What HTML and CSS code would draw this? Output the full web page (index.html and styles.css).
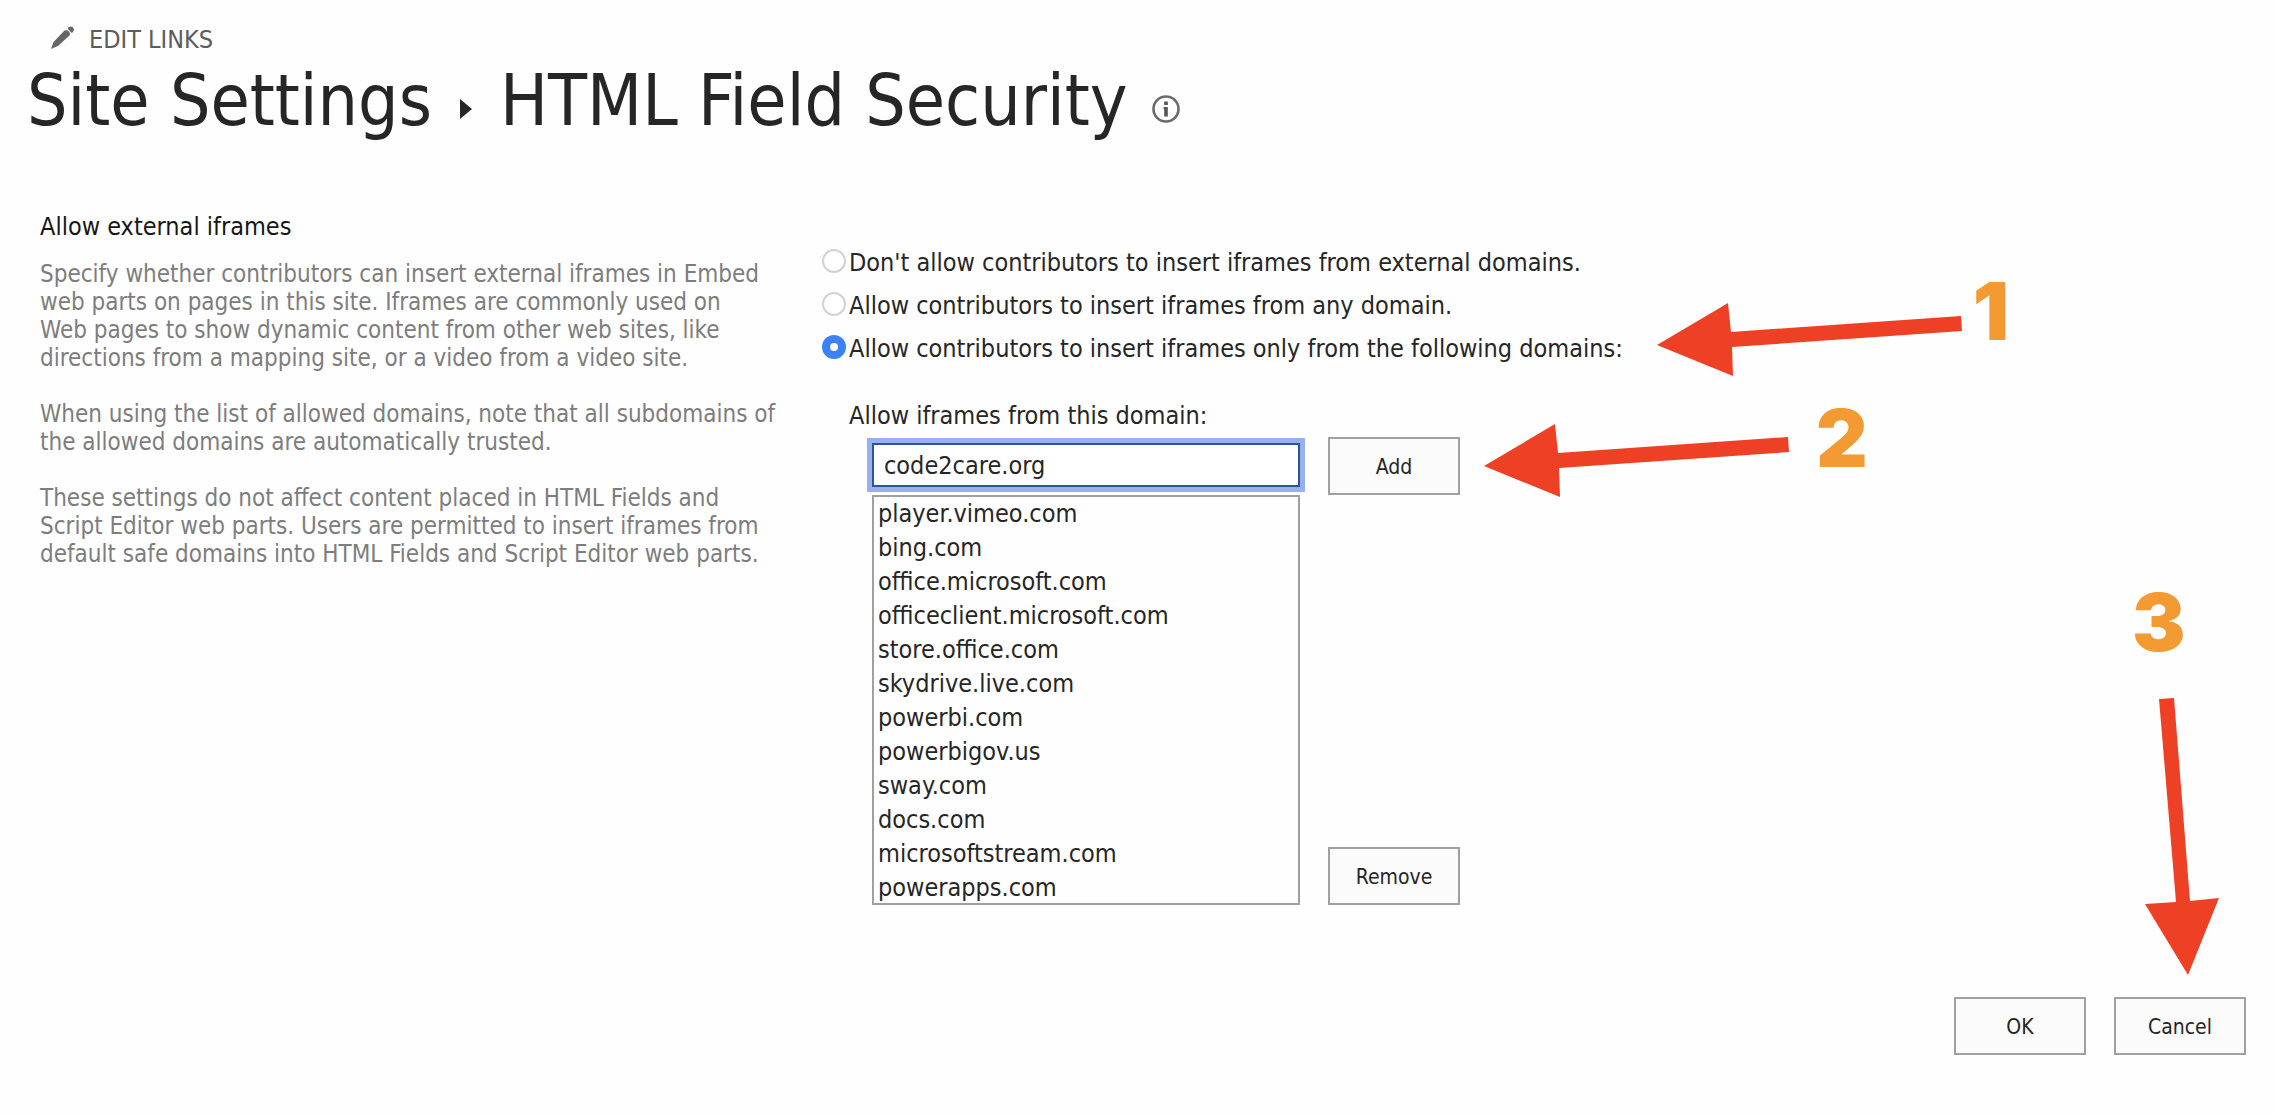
FILE: index.html
```
<!DOCTYPE html>
<html lang="en">
<head>
<meta charset="utf-8">
<title>HTML Field Security</title>
<link rel="stylesheet" href="styles.css">
</head>
<body>
<header class="page-header">
  <a class="edit-links" href="#">
    <svg class="pencil" viewBox="0 0 24 24" aria-hidden="true"><path d="M0 23 L2.500 16 L13.500 4.500 Q16 3.500 18 5.500 Q19.500 7.500 18.500 9.500 L7 20 Z" fill="#666"/><path d="M16.500 2.500 Q18.500 -0.500 21.500 1 Q24 3 22 6 L20.800 7 Z" fill="#666"/></svg>
    <span>EDIT LINKS</span>
  </a>
  <h1 class="title">
    <a href="#">Site Settings</a>
    <svg class="crumb" viewBox="0 0 12 20" aria-hidden="true"><path d="M0 0 L12 10 L0 20 Z" fill="#262626"/></svg>
    <span>HTML Field Security</span>
    <svg class="info" viewBox="0 0 28 28" aria-hidden="true"><circle cx="14" cy="14" r="12.500" fill="none" stroke="#6a6a6a" stroke-width="2.600"/><path d="M12.200 6.500h3.600v3.400h-3.600z M11.600 12h4.200v9.500h-3.600v-7.500h-.6z" fill="#555"/></svg>
  </h1>
</header>

<main class="settings">
  <section class="about">
    <h2>Allow external iframes</h2>
    <p>Specify whether contributors can insert external iframes in Embed web parts on pages in this site. Iframes are commonly used on<br>Web pages to show dynamic content from other web sites, like<br>directions from a mapping site, or a video from a video site.</p>
    <p>When using the list of allowed domains, note that all subdomains of the allowed domains are automatically trusted.</p>
    <p>These settings do not affect content placed in HTML Fields and Script Editor web parts. Users are permitted to insert iframes from default safe domains into HTML Fields and Script Editor web parts.</p>
  </section>

  <form class="options" id="security">
    <div class="choice"><input type="radio" name="mode" id="mode-none"><label for="mode-none">Don't allow contributors to insert iframes from external domains.</label></div>
    <div class="choice"><input type="radio" name="mode" id="mode-any"><label for="mode-any">Allow contributors to insert iframes from any domain.</label></div>
    <div class="choice">
      <input type="radio" name="mode" id="mode-list" checked><label for="mode-list">Allow contributors to insert iframes only from the following domains:</label>
      <div class="callout callout-1">
        <svg class="arrow-left" viewBox="0 0 306 74" aria-hidden="true"><path d="M0 42 L71 0 L74 29 L304 13 L305 28 L75 44 L76 73 Z"/></svg>
        <span class="step">1</span>
      </div>
    </div>

    <div class="domains">
      <label class="domain-label" for="domain">Allow iframes from this domain:</label>
      <div class="domain-row">
        <input class="domain-input" type="text" id="domain" value="code2care.org">
        <div class="action">
          <button type="button">Add</button>
          <div class="callout callout-2">
            <svg class="arrow-left" viewBox="0 0 306 74" aria-hidden="true"><path d="M0 42 L71 0 L74 29 L304 13 L305 28 L75 44 L76 73 Z"/></svg>
            <span class="step">2</span>
          </div>
        </div>
      </div>
      <div class="domain-row list-row">
        <select class="domain-list" size="12" multiple aria-label="Allowed domains">
          <option>player.vimeo.com</option>
          <option>bing.com</option>
          <option>office.microsoft.com</option>
          <option>officeclient.microsoft.com</option>
          <option>store.office.com</option>
          <option>skydrive.live.com</option>
          <option>powerbi.com</option>
          <option>powerbigov.us</option>
          <option>sway.com</option>
          <option>docs.com</option>
          <option>microsoftstream.com</option>
          <option>powerapps.com</option>
        </select>
        <button type="button">Remove</button>
      </div>
    </div>
  </form>
</main>

<footer class="buttons">
  <button type="submit" form="security">OK</button>
  <div class="action">
    <button type="button">Cancel</button>
    <div class="callout callout-3">
      <span class="step">3</span>
      <svg class="arrow-down" viewBox="0 0 74 278" aria-hidden="true"><path d="M14 1 L29 0 L45 203 L74 200 L43 277 L0 206 L31 204 Z"/></svg>
    </div>
  </div>
</footer>
</body>
</html>
```
FILE: styles.css
```
* {
  box-sizing: border-box;
}

body {
  margin: 0;
  padding: 25px 30px 60px 27px;
  background: #fefefe;
  color: #262626;
  font: 25px/30px "DejaVu Sans Condensed", "DejaVu Sans", sans-serif;
}

h1,
h2,
p {
  margin: 0;
  font-weight: normal;
}

a {
  color: inherit;
  text-decoration: none;
}

.edit-links {
  display: flex;
  align-items: center;
  gap: 14px;
  width: max-content;
  margin-left: 24px;
  color: #5c5c5c;
}

.pencil {
  width: 24px;
  height: 24px;
  margin-bottom: 4px;
}

.title {
  display: flex;
  align-items: center;
  gap: 28px;
  color: #262626;
  font-size: 71px;
  line-height: 92px;
}

.crumb {
  width: 12px;
  height: 20px;
  margin-top: 16px;
}

.info {
  width: 28px;
  height: 28px;
  margin: 16px 0 0 -4px;
}

.settings {
  display: grid;
  grid-template-columns: 740px 1fr;
  column-gap: 42px;
  padding: 65px 0 0 13px;
}

.about {
  color: #7d7d7d;
  font-size: 24px;
  line-height: 28px;
}

.about h2 {
  margin-bottom: 18px;
  color: #161616;
  font-size: 25px;
  line-height: 30px;
}

.about p + p {
  margin-top: 28px;
}

.options {
  padding-top: 36px;
}

.choice {
  display: flex;
  align-items: center;
  position: relative;
  width: max-content;
  height: 30px;
  margin-bottom: 13px;
}

.choice input {
  appearance: none;
  width: 24px;
  height: 24px;
  margin: 0 3px 4px 0;
  border: 2px solid #d2d2d2;
  border-radius: 50%;
  background: #fff;
}

.choice input:checked {
  border: 8px solid #3b82f7;
}

.domains {
  padding: 24px 0 0 27px;
}

.domain-label {
  display: block;
  margin-bottom: 6px;
}

.domain-row {
  display: flex;
  gap: 28px;
  margin-left: 23px;
}

.domain-input {
  width: 428px;
  height: 44px;
  margin: 6px 0 8px;
  padding: 0 10px;
  border: 2px solid #2c5592;
  outline: 5px solid #97b1ee;
  border-radius: 0;
  background: #fff;
  color: inherit;
  font: inherit;
}

.domain-list {
  width: 428px;
  height: 410px;
  padding: 0;
  border: 2px solid #a0a0a0;
  border-radius: 0;
  background: #fefefe;
  color: inherit;
  font: inherit;
  overflow: hidden;
}

.domain-list option {
  min-height: 34px;
  padding: 2px 4px;
  line-height: 30px;
}

.list-row {
  align-items: flex-end;
}

button {
  width: 132px;
  height: 58px;
  padding: 2px 0 0;
  border: 2px solid #a0a0a0;
  border-radius: 0;
  background: #fbfbfb;
  color: inherit;
  font: 21px/30px "DejaVu Sans Condensed", "DejaVu Sans", sans-serif;
}

.action {
  position: relative;
}

.buttons {
  display: flex;
  justify-content: flex-end;
  gap: 28px;
  margin-top: 92px;
}

/* Numbered step markers pointing at the controls */
.callout {
  position: absolute;
  display: flex;
  pointer-events: none;
}

.callout path {
  fill: #ed4024;
}

.step {
  color: #f39a32;
  font: 900 80px/80px Inter, "Liberation Sans", sans-serif;
}

.arrow-left {
  align-self: flex-end;
  width: 306px;
  height: 74px;
}

.arrow-down {
  width: 74px;
  height: 278px;
  margin-left: 13px;
}

.callout-1 {
  top: -63px;
  left: calc(100% + 34px);
  gap: 10px;
  height: 106px;
}

.callout-2 {
  top: -39px;
  left: calc(100% + 24px);
  gap: 26px;
  height: 100px;
}

.callout-3 {
  right: 27px;
  bottom: calc(100% + 21px);
  flex-direction: column;
  align-items: flex-start;
  gap: 36px;
}
```
